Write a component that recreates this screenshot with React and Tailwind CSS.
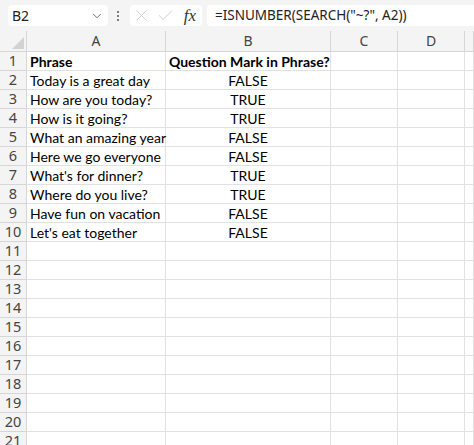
import { ChevronDown, X, Check } from "lucide-react";

const ROWS = [
  ["Phrase", "Question Mark in Phrase?", true],
  ["Today is a great day", "FALSE"],
  ["How are you today?", "TRUE"],
  ["How is it going?", "TRUE"],
  ["What an amazing year", "FALSE"],
  ["Here we go everyone", "FALSE"],
  ["What's for dinner?", "TRUE"],
  ["Where do you live?", "TRUE"],
  ["Have fun on vacation", "FALSE"],
  ["Let's eat together", "FALSE"],
];

const COLS = "grid grid-cols-[27px_139px_165px_67px_67px_1fr]";
const cell = "h-[19px] whitespace-nowrap border-r border-b border-[#e1e1e1]";

function FormulaBar() {
  return (
    <div className="flex h-[31px] items-center bg-[#f4f4f4] pl-[8px] text-[#222]" style={{ fontFamily: "'Noto Sans', sans-serif" }}>
      <div className="flex h-[21px] w-[100px] items-center justify-between rounded-[4px] bg-white pl-[4px] pr-[4px] text-[14px]">
        <span>B2</span>
        <ChevronDown className="h-[14px] w-[14px] text-[#555]" strokeWidth={1.5} />
      </div>
      <div className="ml-[8px] flex w-[4px] flex-col items-center gap-[2px]">
        <span className="h-[2px] w-[2px] rounded-full bg-[#555]" />
        <span className="h-[2px] w-[2px] rounded-full bg-[#555]" />
        <span className="h-[2px] w-[2px] rounded-full bg-[#555]" />
      </div>
      <div className="ml-[10px] flex h-[21px] w-[72px] items-center rounded-[4px] bg-white pl-[2px] pr-[6px]">
        <X className="h-[19px] w-[19px] text-[#c4c4c4]" strokeWidth={1} />
        <Check className="ml-[5px] h-[19px] w-[19px] text-[#c4c4c4]" strokeWidth={1} />
        <span className="ml-auto text-[17px] italic text-[#333]" style={{ fontFamily: "'Liberation Serif', serif" }}>fx</span>
      </div>
      <div className="ml-[5px] flex h-[21px] flex-1 items-center whitespace-nowrap rounded-l-[4px] bg-white pl-[8px] text-[13.5px]">
        =ISNUMBER(SEARCH("~?", A2))
      </div>
    </div>
  );
}

function Header() {
  return (
    <div className={`${COLS} h-[21px] bg-[#f4f4f4] text-[14px] text-[#444]`} style={{ fontFamily: "'Noto Sans', sans-serif" }}>
      <div className="relative border-r border-b border-[#d6d6d6]">
        <svg className="absolute bottom-[2px] right-[2px]" width="12" height="12" viewBox="0 0 12 12">
          <polygon points="12,0 12,12 0,12" fill="#d2d2d2" />
        </svg>
      </div>
      {["A", "B", "C", "D", ""].map((c, i) => (
        <div key={i} className="flex items-center justify-center border-r border-b border-[#d6d6d6] leading-none">
          {c}
        </div>
      ))}
    </div>
  );
}

export default function App() {
  const rows = Array.from({ length: 21 }, (_, i) => ROWS[i] || ["", ""]);
  return (
    <div className="h-[445px] w-[474px] overflow-hidden bg-white">
      <FormulaBar />
      <Header />
      <div>
        {rows.map((r, i) => (
          <div key={i} className={`${COLS} text-[14px] text-black`} style={{ fontFamily: "Lato, 'Open Sans', sans-serif" }}>
            <div className="flex h-[19px] items-center justify-center border-r border-b border-[#d6d6d6] bg-[#f4f4f4] text-[14.5px] text-[#444]" style={{ fontFamily: "'Noto Sans', sans-serif" }}>
              {i + 1}
            </div>
            <div className={`${cell} flex items-center pl-[3px] ${r[2] ? "font-bold" : ""}`}>{r[0]}</div>
            <div className={`${cell} flex items-center ${r[2] ? "pl-[3px] font-bold" : "justify-center"}`}>{r[1]}</div>
            <div className={cell} />
            <div className={cell} />
            <div className={cell} />
          </div>
        ))}
      </div>
    </div>
  );
}
